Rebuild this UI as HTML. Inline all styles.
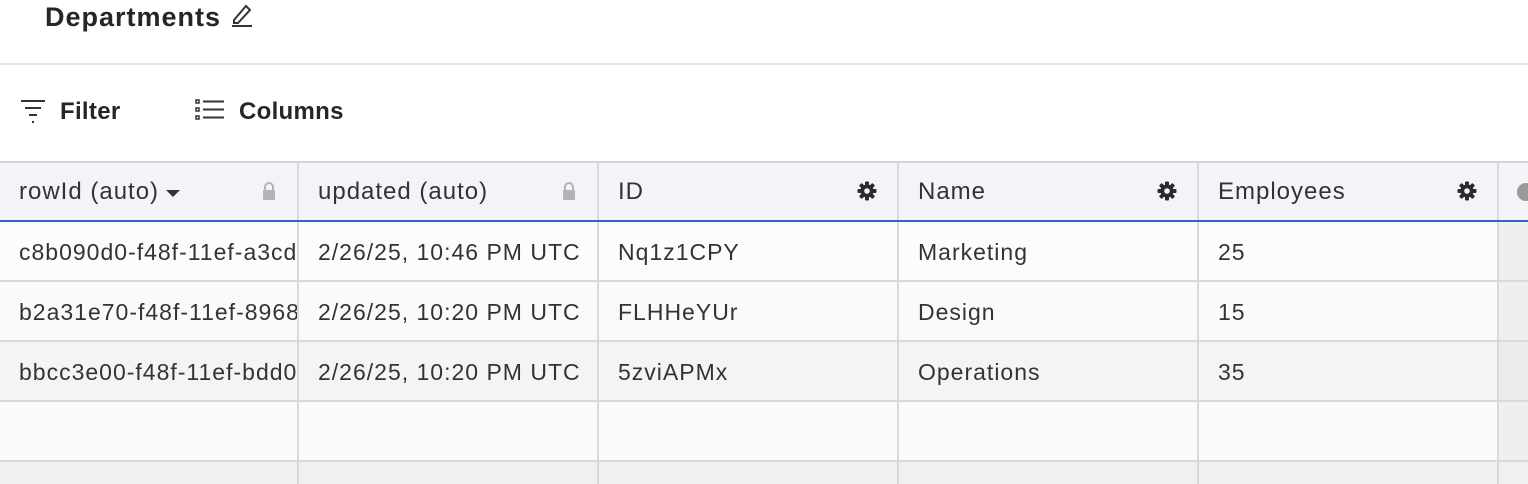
<!DOCTYPE html>
<html><head><style>
*{margin:0;padding:0;box-sizing:border-box}
html,body{width:1528px;height:484px;overflow:hidden}
body{background:#fff;font-family:"Liberation Sans",sans-serif;color:#2b2b2b;position:relative}
.abs{position:absolute}
.title{left:45px;top:2px;font-size:27px;font-weight:600;color:#262626;letter-spacing:1px}
.hr{left:0;top:63px;width:1528px;height:2px;background:#e2e2e2}
.tb{top:97px;font-size:24px;font-weight:600;color:#262626;letter-spacing:0.3px}
.row{position:absolute;left:0;width:1528px;height:60px;border-bottom:2px solid #d9d9d9}
.c{position:absolute;top:0;height:100%;border-right:2px solid #d9d9d9;font-size:23px;letter-spacing:1px;line-height:61px;padding-left:19px;white-space:nowrap;overflow:hidden;color:#333}
.hdr{top:161px;height:61px;background:#f3f4f7;border-top:2px solid #d4d4d4;border-bottom:2px solid #2f66c4}
.hdr .c{line-height:58px;border-right-color:#dadada;font-size:24px;letter-spacing:1px}
.ic{position:absolute;right:20px;top:18px}
</style></head><body>
<div class="abs title">Departments <svg width="24" height="26" viewBox="0 0 24 26" style="vertical-align:-2px"><path d="M4 18 L16 4 L20 8 L8 21 L4 21 Z" fill="none" stroke="#333" stroke-width="2"/><path d="M2 24 H22" stroke="#333" stroke-width="2"/></svg></div>
<div class="abs hr"></div>
<div class="abs tb" style="left:20px"><svg width="26" height="26" viewBox="0 0 26 26" style="vertical-align:-4px;margin-right:14px"><path d="M1 4H25M5 11H21M9 18H17M12 25H14" stroke="#333" stroke-width="2"/></svg>Filter</div>
<div class="abs tb" style="left:195px"><svg width="30" height="26" viewBox="0 0 30 26" style="vertical-align:-4px;margin-right:14px"><rect x="1" y="3" width="3" height="3" fill="none" stroke="#333" stroke-width="1.5"/><rect x="1" y="11" width="3" height="3" fill="none" stroke="#333" stroke-width="1.5"/><rect x="1" y="19" width="3" height="3" fill="none" stroke="#333" stroke-width="1.5"/><path d="M8 4.5H29M8 12.5H29M8 20.5H29" stroke="#333" stroke-width="2"/></svg>Columns</div>

<div class="row hdr">
<div class="c" style="left:0;width:299px">rowId (auto)<svg width="16" height="10" viewBox="0 0 16 10" style="margin-left:6px;vertical-align:1px"><path d="M1 2H15L8 9Z" fill="#333"/></svg><svg class="ic" width="16" height="20" viewBox="0 0 16 20"><path d="M4 9V6a4 4 0 0 1 8 0v3" fill="none" stroke="#b3b3b3" stroke-width="2"/><rect x="2" y="9" width="12" height="10" rx="1" fill="#b3b3b3"/></svg></div>
<div class="c" style="left:299px;width:300px">updated (auto)<svg class="ic" width="16" height="20" viewBox="0 0 16 20"><path d="M4 9V6a4 4 0 0 1 8 0v3" fill="none" stroke="#b3b3b3" stroke-width="2"/><rect x="2" y="9" width="12" height="10" rx="1" fill="#b3b3b3"/></svg></div>
<div class="c" style="left:599px;width:300px">ID<svg class="ic" width="20" height="20" viewBox="0 0 20 20"><g fill="#2b2b2b"><circle cx="10" cy="10" r="6.5"/><rect x="8" y="0.5" width="4" height="19" rx="1"/><rect x="0.5" y="8" width="19" height="4" rx="1"/><rect x="8" y="0.5" width="4" height="19" rx="1" transform="rotate(45 10 10)"/><rect x="8" y="0.5" width="4" height="19" rx="1" transform="rotate(-45 10 10)"/></g><circle cx="10" cy="10" r="2.8" fill="#f3f4f7"/></svg></div>
<div class="c" style="left:899px;width:300px">Name<svg class="ic" width="20" height="20" viewBox="0 0 20 20"><g fill="#2b2b2b"><circle cx="10" cy="10" r="6.5"/><rect x="8" y="0.5" width="4" height="19" rx="1"/><rect x="0.5" y="8" width="19" height="4" rx="1"/><rect x="8" y="0.5" width="4" height="19" rx="1" transform="rotate(45 10 10)"/><rect x="8" y="0.5" width="4" height="19" rx="1" transform="rotate(-45 10 10)"/></g><circle cx="10" cy="10" r="2.8" fill="#f3f4f7"/></svg></div>
<div class="c" style="left:1199px;width:300px">Employees<svg class="ic" width="20" height="20" viewBox="0 0 20 20"><g fill="#2b2b2b"><circle cx="10" cy="10" r="6.5"/><rect x="8" y="0.5" width="4" height="19" rx="1"/><rect x="0.5" y="8" width="19" height="4" rx="1"/><rect x="8" y="0.5" width="4" height="19" rx="1" transform="rotate(45 10 10)"/><rect x="8" y="0.5" width="4" height="19" rx="1" transform="rotate(-45 10 10)"/></g><circle cx="10" cy="10" r="2.8" fill="#f3f4f7"/></svg></div>
<div class="c" style="left:1499px;width:40px;border:none"><div style="position:absolute;left:18px;top:20px;width:18px;height:18px;border-radius:50%;background:#9a9a9a"></div></div>
</div>

<div class="row" style="top:222px;background:#fcfcfc">
<div class="c" style="left:0;width:299px">c8b090d0-f48f-11ef-a3cd</div>
<div class="c" style="left:299px;width:300px">2/26/25, 10:46 PM UTC</div>
<div class="c" style="left:599px;width:300px">Nq1z1CPY</div>
<div class="c" style="left:899px;width:300px">Marketing</div>
<div class="c" style="left:1199px;width:300px">25</div>
<div class="c" style="left:1499px;width:40px;background:#efefef;border:none"></div>
</div>
<div class="row" style="top:282px;background:#fafafa">
<div class="c" style="left:0;width:299px">b2a31e70-f48f-11ef-8968</div>
<div class="c" style="left:299px;width:300px">2/26/25, 10:20 PM UTC</div>
<div class="c" style="left:599px;width:300px">FLHHeYUr</div>
<div class="c" style="left:899px;width:300px">Design</div>
<div class="c" style="left:1199px;width:300px">15</div>
<div class="c" style="left:1499px;width:40px;background:#efefef;border:none"></div>
</div>
<div class="row" style="top:342px;background:#f4f4f4">
<div class="c" style="left:0;width:299px">bbcc3e00-f48f-11ef-bdd0</div>
<div class="c" style="left:299px;width:300px">2/26/25, 10:20 PM UTC</div>
<div class="c" style="left:599px;width:300px">5zviAPMx</div>
<div class="c" style="left:899px;width:300px">Operations</div>
<div class="c" style="left:1199px;width:300px">35</div>
<div class="c" style="left:1499px;width:40px;background:#ececec;border:none"></div>
</div>
<div class="row" style="top:402px;background:#fafafa">
<div class="c" style="left:0;width:299px"></div><div class="c" style="left:299px;width:300px"></div><div class="c" style="left:599px;width:300px"></div><div class="c" style="left:899px;width:300px"></div><div class="c" style="left:1199px;width:300px"></div>
<div class="c" style="left:1499px;width:40px;background:#efefef;border:none"></div>
</div>
<div class="row" style="top:462px;height:22px;background:#f0f0f0;border:none">
<div class="c" style="left:0;width:299px"></div><div class="c" style="left:299px;width:300px"></div><div class="c" style="left:599px;width:300px"></div><div class="c" style="left:899px;width:300px"></div><div class="c" style="left:1199px;width:300px"></div>
</div>
</body></html>
